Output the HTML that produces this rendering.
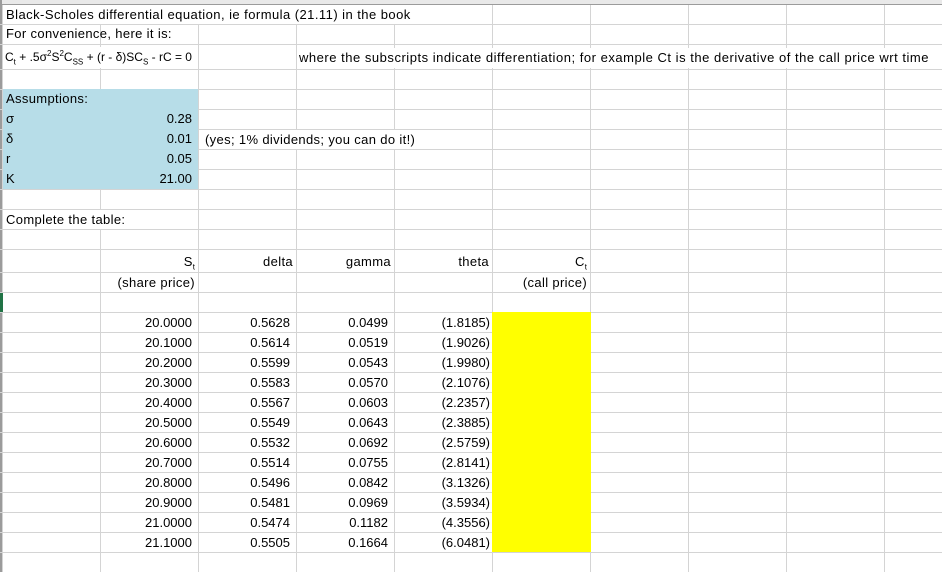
<!DOCTYPE html>
<html><head><meta charset="utf-8"><style>
html,body{margin:0;padding:0}
body{width:942px;height:572px;position:relative;overflow:hidden;background:#fff;font-family:"Liberation Sans",sans-serif;font-size:13px;letter-spacing:0.35px;color:#000}
.g{position:absolute;left:0;top:0;width:942px;height:572px;background:repeating-linear-gradient(90deg,transparent 0,transparent 2px,#d4d4d4 2px,#d4d4d4 3px,transparent 3px,transparent 98px)}
.h{position:absolute;left:0;width:942px;height:1px;background:#d4d4d4}
.t{position:absolute;white-space:nowrap;line-height:20px}
.w{background:#fff}
.r{text-align:right}
.n{letter-spacing:0}
sub,sup{font-size:8px;line-height:0;letter-spacing:0}
</style></head><body>
<div class="g"></div>
<div style="position:absolute;left:0;top:0;width:942px;height:4px;background:#e9e9e9"></div>
<div style="position:absolute;left:0;top:4px;width:942px;height:1px;background:#9b9b9b"></div>
<div style="position:absolute;left:0;top:0;width:2px;height:572px;background:#9b9b9b"></div>
<div style="position:absolute;left:0;top:292px;width:3px;height:20px;background:#217346"></div>
<div class="h" style="top:24px"></div><div class="h" style="top:44px"></div><div class="h" style="top:69px"></div>
<div class="h" style="top:89px"></div><div class="h" style="top:109px"></div><div class="h" style="top:129px"></div>
<div class="h" style="top:149px"></div><div class="h" style="top:169px"></div><div class="h" style="top:189px"></div>
<div class="h" style="top:209px"></div><div class="h" style="top:229px"></div><div class="h" style="top:249px"></div>
<div class="h" style="top:272px"></div><div class="h" style="top:292px"></div>
<div style="position:absolute;left:0;top:312px;width:942px;height:260px;background:repeating-linear-gradient(180deg,#d4d4d4 0,#d4d4d4 1px,transparent 1px,transparent 20px)"></div>
<div style="position:absolute;left:3px;top:89px;width:195px;height:100px;background:#b7dde8"></div>
<div style="position:absolute;left:492px;top:312px;width:99px;height:240px;background:#ffff00"></div>

<div class="t w" style="left:3px;top:5px;width:414px;height:19px;line-height:19px;padding-left:3px;box-sizing:border-box;letter-spacing:0.45px">Black-Scholes differential equation, ie formula (21.11) in the book</div>
<div class="t" style="left:6px;top:24px">For convenience, here it is:</div>
<div class="t w" style="left:3px;top:47px;font-size:12px;letter-spacing:0;padding-left:2px;height:21px">C<sub>t</sub> + .5σ<sup>2</sup>S<sup>2</sup>C<sub>SS</sub> + (r - δ)SC<sub>S</sub> - rC = 0</div>
<div class="t w" style="left:297px;top:48px;width:645px;padding-left:2px;height:20px;letter-spacing:0.52px">where the subscripts indicate differentiation; for example Ct is the derivative of the call price wrt time</div>
<div class="t" style="left:6px;top:89px">Assumptions:</div>
<div class="t" style="left:6px;top:109px">σ</div>
<div class="t" style="left:6px;top:129px">δ</div>
<div class="t" style="left:6px;top:149px">r</div>
<div class="t" style="left:6px;top:169px">K</div>
<div class="t r n" style="left:100px;width:92px;top:109px">0.28</div>
<div class="t r n" style="left:100px;width:92px;top:129px">0.01</div>
<div class="t r n" style="left:100px;width:92px;top:149px">0.05</div>
<div class="t r n" style="left:100px;width:92px;top:169px">21.00</div>
<div class="t w" style="left:199px;top:130px;width:222px;height:19px;padding-left:6px;line-height:19px">(yes; 1% dividends; you can do it!)</div>
<div class="t w" style="left:3px;top:210px;width:130px;padding-left:3px;height:19px;line-height:19px">Complete the table:</div>

<div class="t r" style="left:100px;width:95px;top:252px">S<sub>t</sub></div>
<div class="t r" style="left:198px;width:95px;top:252px">delta</div>
<div class="t r" style="left:296px;width:95px;top:252px">gamma</div>
<div class="t r" style="left:394px;width:95px;top:252px">theta</div>
<div class="t r" style="left:492px;width:95px;top:252px">C<sub>t</sub></div>
<div class="t r" style="left:100px;width:95px;top:273px">(share price)</div>
<div class="t r" style="left:492px;width:95px;top:273px">(call price)</div>

<div class="t r n" style="left:100px;width:92px;top:313px;line-height:20px">20.0000<br>20.1000<br>20.2000<br>20.3000<br>20.4000<br>20.5000<br>20.6000<br>20.7000<br>20.8000<br>20.9000<br>21.0000<br>21.1000</div>
<div class="t r n" style="left:198px;width:92px;top:313px">0.5628<br>0.5614<br>0.5599<br>0.5583<br>0.5567<br>0.5549<br>0.5532<br>0.5514<br>0.5496<br>0.5481<br>0.5474<br>0.5505</div>
<div class="t r n" style="left:296px;width:92px;top:313px">0.0499<br>0.0519<br>0.0543<br>0.0570<br>0.0603<br>0.0643<br>0.0692<br>0.0755<br>0.0842<br>0.0969<br>0.1182<br>0.1664</div>
<div class="t r n" style="left:394px;width:96px;top:313px">(1.8185)<br>(1.9026)<br>(1.9980)<br>(2.1076)<br>(2.2357)<br>(2.3885)<br>(2.5759)<br>(2.8141)<br>(3.1326)<br>(3.5934)<br>(4.3556)<br>(6.0481)</div>
</body></html>
